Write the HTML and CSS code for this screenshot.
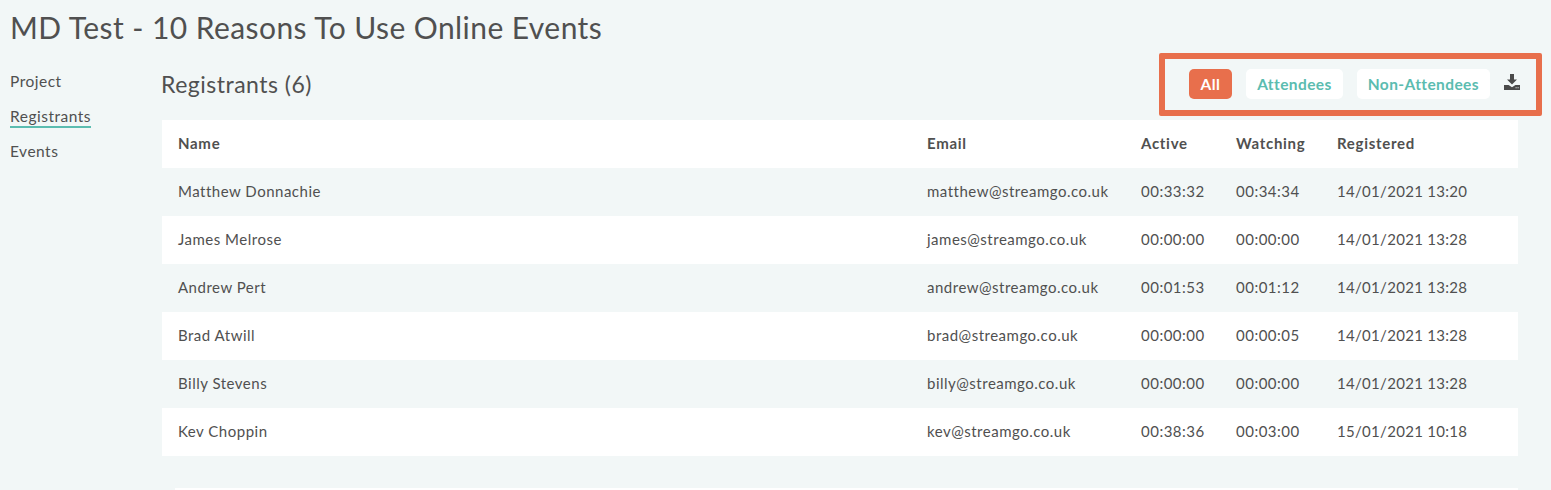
FILE: index.html
```html
<!DOCTYPE html>
<html lang="en">
<head>
  <meta charset="UTF-8" />
  <title>MD Test - 10 Reasons To Use Online Events</title>
  <link rel="stylesheet" href="styles.css">
</head>
<body>
  <h1 class="page-title">MD Test - 10 Reasons To Use Online Events</h1>

  <div class="layout">
    <nav class="side-nav">
      <a class="side-link">Project</a>
      <a class="side-link active">Registrants</a>
      <a class="side-link">Events</a>
    </nav>

    <main class="content">
      <div class="content-head">
        <h2 class="section-title">Registrants (6)</h2>
        <div class="filters">
          <button class="filter selected">All</button>
          <button class="filter">Attendees</button>
          <button class="filter">Non-Attendees</button>
          <svg class="download" viewBox="0 0 16 16" width="16" height="16">
            <path fill="#4a4a4a" d="M6 0h4v5.5h3L8 10.6 3 5.5h3z"/>
            <path fill="#4a4a4a" d="M0 11h4.6L8 13.2 11.4 11H16v5H0zM11.6 13.2v1h1v-1zM13.6 13.2v1h1v-1z" fill-rule="evenodd"/>
          </svg>
        </div>
      </div>

      <table class="registrants">
        <colgroup>
          <col class="col-name">
          <col class="col-email">
          <col class="col-active">
          <col class="col-watching">
          <col class="col-registered">
        </colgroup>
        <thead>
          <tr><th>Name</th><th>Email</th><th>Active</th><th>Watching</th><th>Registered</th></tr>
        </thead>
        <tbody>
          <tr><td>Matthew Donnachie</td><td>matthew@streamgo.co.uk</td><td>00:33:32</td><td>00:34:34</td><td>14/01/2021 13:20</td></tr>
          <tr><td>James Melrose</td><td>james@streamgo.co.uk</td><td>00:00:00</td><td>00:00:00</td><td>14/01/2021 13:28</td></tr>
          <tr><td>Andrew Pert</td><td>andrew@streamgo.co.uk</td><td>00:01:53</td><td>00:01:12</td><td>14/01/2021 13:28</td></tr>
          <tr><td>Brad Atwill</td><td>brad@streamgo.co.uk</td><td>00:00:00</td><td>00:00:05</td><td>14/01/2021 13:28</td></tr>
          <tr><td>Billy Stevens</td><td>billy@streamgo.co.uk</td><td>00:00:00</td><td>00:00:00</td><td>14/01/2021 13:28</td></tr>
          <tr><td>Kev Choppin</td><td>kev@streamgo.co.uk</td><td>00:38:36</td><td>00:03:00</td><td>15/01/2021 10:18</td></tr>
        </tbody>
      </table>

      <div class="next-card"></div>
    </main>
  </div>
</body>
</html>
```

FILE: styles.css
```css
html, body {
  height: 100%;
  overflow: hidden;
}

body {
  margin: 0;
  background: #f2f7f7;
  color: #505050;
  font-family: "Lato", sans-serif;
  font-size: 15px;
  letter-spacing: 0.5px;
}

.page-title {
  margin: 0;
  padding: 8px 10px 0;
  font-size: 30px;
  line-height: 38px;
  font-weight: 400;
  letter-spacing: 0.43px;
}

.layout {
  display: flex;
  padding: 7px 33px 0 10px;
}

.side-nav {
  width: 152px;
  flex: none;
  display: flex;
  flex-direction: column;
  align-items: flex-start;
  gap: 15px;
  padding-top: 18px;
  font-size: 15.5px;
}

.side-link {
  line-height: 20px;
}

.side-link.active {
  border-bottom: 2px solid #5bbcb0;
  margin-bottom: -2px;
}

.content {
  flex: 1;
  min-width: 0;
}

.content-head {
  display: flex;
  justify-content: space-between;
  align-items: center;
  height: 63px;
  margin-bottom: 4px;
}

.section-title {
  margin: 0 0 2px -1px;
  font-size: 23px;
  font-weight: 400;
}

.filters {
  display: flex;
  align-items: center;
  gap: 14px;
  box-sizing: border-box;
  height: 63px;
  margin-right: -24px;
  padding: 0 16px 2px 24px;
  border: 6px solid #e86f4c;
  border-radius: 2px;
}

.filter {
  height: 30px;
  padding: 0 11px;
  border: none;
  border-radius: 5px;
  background: #fff;
  color: #5bbcb0;
  font-family: inherit;
  font-size: 15.5px;
  font-weight: 700;
  letter-spacing: 0.4px;
}

.filter.selected {
  padding: 0 12px;
  background: #e86f4c;
  color: #fff;
}

.download {
  flex: none;
  margin-top: -4px;
}

.registrants {
  width: 100%;
  border-collapse: collapse;
  table-layout: fixed;
}

.col-name { width: 749px; }
.col-email { width: 214px; }
.col-active { width: 95px; }
.col-watching { width: 101px; }

.registrants th,
.registrants td {
  height: 48px;
  padding: 0 0 2px 16px;
  box-sizing: border-box;
  text-align: left;
  white-space: nowrap;
}

.registrants th {
  font-weight: 700;
  letter-spacing: 0.7px;
}

.registrants td:last-child {
  letter-spacing: 0.3px;
}

.registrants thead tr,
.registrants tbody tr:nth-child(even) {
  background: #fff;
}

.next-card {
  height: 2px;
  margin: 32px 0 0 13px;
  background: #fff;
}
```
